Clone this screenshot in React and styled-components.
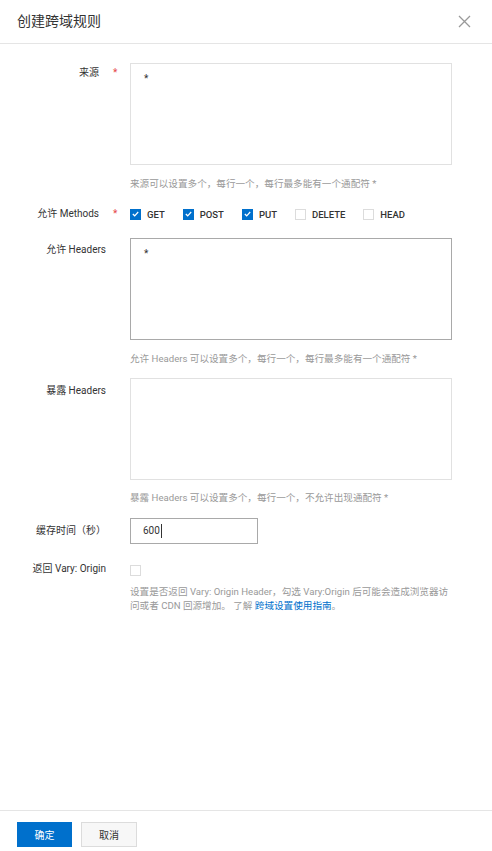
import React, { useState } from 'react'
import styled, { createGlobalStyle } from 'styled-components'

const FONT = `Roboto, 'Noto Sans CJK SC', sans-serif`

const GlobalStyle = createGlobalStyle`
  html, body {
    margin: 0;
    padding: 0;
    background: #fff;
  }
  body {
    font-family: ${FONT};
    color: #333;
  }
  * { box-sizing: border-box; }
`

const Dialog = styled.div`
  width: 492px;
  height: 851px;
  display: flex;
  flex-direction: column;
  background: #fff;
`

const Header = styled.div`
  height: 44px;
  display: flex;
  align-items: center;
  justify-content: space-between;
  padding: 0 21px 1px 17px;
  border-bottom: 1px solid #e5e5e5;
`

const Title = styled.h2`
  margin: 0;
  font-size: 14px;
  font-weight: 400;
  color: #333;
  line-height: 20px;
`

const Close = styled.button`
  border: none;
  background: none;
  padding: 0;
  width: 14px;
  height: 14px;
  display: flex;
  align-items: center;
  justify-content: center;
  cursor: pointer;
`

const Body = styled.div`
  flex: 1;
  padding: 19px 40px 0 0;
`

const Row = styled.div`
  display: grid;
  grid-template-columns: 118px 322px;
  column-gap: 12px;
  margin-bottom: ${p => p.gap || 12}px;
`

const Label = styled.div`
  display: flex;
  justify-content: flex-end;
  padding-right: ${p => p.required ? 0 : 12}px;
  font-size: 10px;
  line-height: ${p => p.lh || 22}px;
  color: #333;
  white-space: nowrap;
`

const Star = styled.span`
  color: #e54545;
  margin-left: 14px;
  width: 5px;
`

const Control = styled.div`
  display: flex;
  flex-direction: column;
`

const TextArea = styled.textarea`
  width: 322px;
  height: 102px;
  resize: none;
  border: 1px solid ${p => p.active ? '#a9a9a9' : '#e1e1e1'};
  padding: 9px 13px;
  font-family: ${FONT};
  font-size: 10px;
  color: #333;
  outline: none;
  border-radius: 0;
`

const Input = styled.div`
  width: 128px;
  height: 26px;
  border: 1px solid #a9a9a9;
  padding: 0 12px;
  font-size: 10px;
  line-height: 24px;
  color: #333;
  display: flex;
  align-items: center;
`

const Caret = styled.span`
  display: inline-block;
  width: 1px;
  height: 14px;
  background: #333;
  margin-left: 1px;
`

const Help = styled.div`
  margin-top: ${p => p.top || 12}px;
  font-size: 9.6px;
  line-height: 14px;
  color: #999;
  white-space: nowrap;
`

const Link = styled.a`
  color: #0070cc;
  text-decoration: none;
`

const Checks = styled.div`
  display: flex;
  align-items: center;
  height: 22px;
`

const CheckItem = styled.label`
  display: flex;
  align-items: center;
  margin-right: 18px;
  font-size: 9.5px;
  font-weight: 500;
  color: #333;
  cursor: pointer;
`

const Box = styled.span`
  width: 11px;
  height: 11px;
  margin-right: 6px;
  display: flex;
  align-items: center;
  justify-content: center;
  background: ${p => p.checked ? '#0070cc' : '#fff'};
  border: 1px solid ${p => p.checked ? '#0070cc' : '#dcdcdc'};
`

const Footer = styled.div`
  border-top: 1px solid #e5e5e5;
  padding: 11px 17px 4px;
  display: flex;
  gap: 9px;
`

const Button = styled.button`
  width: ${p => p.primary ? 55 : 56}px;
  height: 25px;
  font-family: ${FONT};
  font-size: 10px;
  padding: 0;
  border: 1px solid ${p => p.primary ? '#0070cc' : '#dcdcdc'};
  background: ${p => p.primary ? '#0070cc' : '#f7f7f7'};
  color: ${p => p.primary ? '#fff' : '#333'};
  cursor: pointer;
`

const Checkbox = ({ checked, label, onChange }) => (
  <CheckItem onClick={onChange}>
    <Box checked={checked}>
      {checked && (
        <svg width="7" height="6" viewBox="0 0 7 6">
          <path d="M0.8 3 L2.7 4.8 L6.2 1" fill="none" stroke="#fff" strokeWidth="1.2" />
        </svg>
      )}
    </Box>
    {label}
  </CheckItem>
)

const METHODS = ['GET', 'POST', 'PUT', 'DELETE', 'HEAD']

export default function App() {
  const [methods, setMethods] = useState({ GET: true, POST: true, PUT: true, DELETE: false, HEAD: false })
  const [vary, setVary] = useState(false)

  const toggle = (m) => setMethods(s => ({ ...s, [m]: !s[m] }))

  return (
    <>
      <GlobalStyle />
      <Dialog>
        <Header>
          <Title>创建跨域规则</Title>
          <Close aria-label="关闭">
            <svg width="13" height="13" viewBox="0 0 13 13">
              <path d="M1 1 L12 12 M12 1 L1 12" stroke="#999" strokeWidth="1.3" />
            </svg>
          </Close>
        </Header>

        <Body>
          <Row>
            <Label required lh={20}>来源<Star>*</Star></Label>
            <Control>
              <TextArea defaultValue="*" />
              <Help>来源可以设置多个，每行一个，每行最多能有一个通配符 *</Help>
            </Control>
          </Row>

          <Row gap={13}>
            <Label required>允许 Methods<Star>*</Star></Label>
            <Checks>
              {METHODS.map(m => (
                <Checkbox key={m} label={m} checked={methods[m]} onChange={() => toggle(m)} />
              ))}
            </Checks>
          </Row>

          <Row gap={12}>
            <Label lh={24}>允许 Headers</Label>
            <Control>
              <TextArea active defaultValue="*" />
              <Help>允许 Headers 可以设置多个，每行一个，每行最多能有一个通配符 *</Help>
            </Control>
          </Row>

          <Row gap={13}>
            <Label lh={26}>暴露 Headers</Label>
            <Control>
              <TextArea defaultValue="" />
              <Help top={11}>暴露 Headers 可以设置多个，每行一个，不允许出现通配符 *</Help>
            </Control>
          </Row>

          <Row gap={15}>
            <Label lh={26}>缓存时间（秒）</Label>
            <Control>
              <Input>600<Caret /></Input>
            </Control>
          </Row>

          <Row>
            <Label lh={20}>返回 Vary: Origin</Label>
            <Control>
              <Checks>
                <Checkbox checked={vary} label="" onChange={() => setVary(v => !v)} />
              </Checks>
              <Help top={4}>
                设置是否返回 Vary: Origin Header，勾选 Vary:Origin 后可能会造成浏览器访<br />
                问或者 CDN 回源增加。 了解 <Link href="#">跨域设置使用指南</Link>。
              </Help>
            </Control>
          </Row>
        </Body>

        <Footer>
          <Button primary>确定</Button>
          <Button>取消</Button>
        </Footer>
      </Dialog>
    </>
  )
}
